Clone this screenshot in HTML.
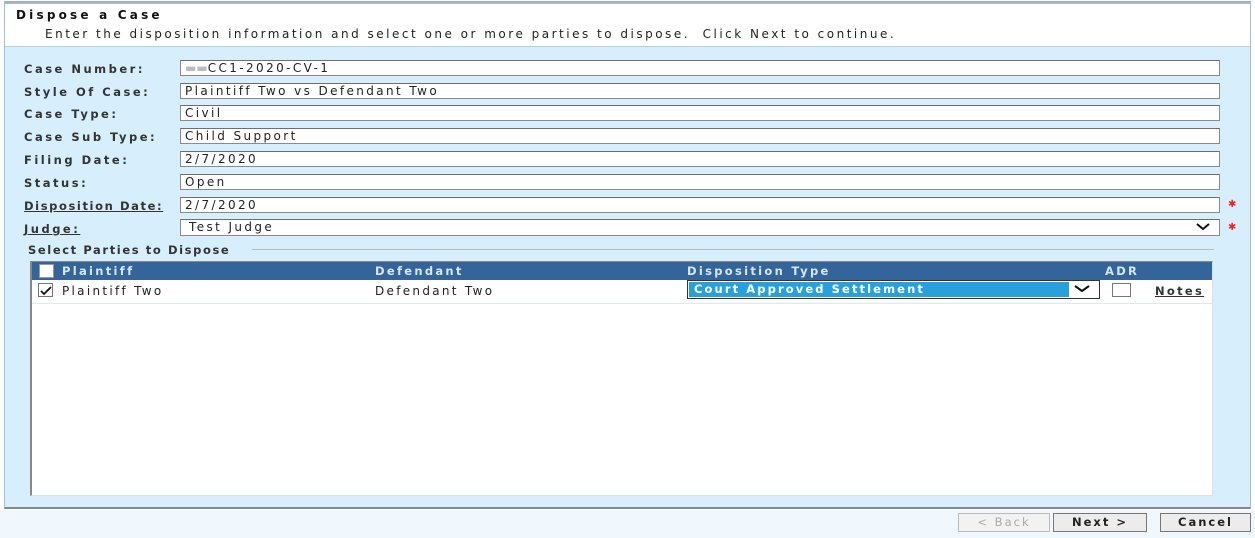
<!DOCTYPE html>
<html><head><meta charset="utf-8"><style>
*{margin:0;padding:0;box-sizing:border-box}
body{width:1255px;height:538px;background:#fff;position:relative;overflow:hidden;font-family:"DejaVu Sans","Liberation Sans",sans-serif;font-size:12px;letter-spacing:2.2px;color:#222}
.abs{position:absolute;white-space:nowrap}
.panel{left:4px;top:3px;width:1247px;height:506px;border:1px solid #a9bccb;border-bottom:2px solid #7f8a93;background:#d7effc}
.head{left:5px;top:4px;width:1245px;height:43px;background:#fff;border-bottom:1px solid #b9cfdd}
.lab{left:24px;font-weight:bold;color:#333;font-size:11.5px;letter-spacing:2.5px}
.inp{left:180px;width:1040px;height:16px;background:#fff;border:1px solid #8a8a8a;border-top-color:#6e6e6e;padding-left:4px;font-size:12px;line-height:14px;color:#222;letter-spacing:2.4px}
.u{text-decoration:underline}
.star{left:1228px;color:#e22;font-size:10px;letter-spacing:0}
.table{left:30px;top:261px;width:1183px;height:235px;background:#fff;border-left:2px solid #888;border-top:1px solid #888;border-bottom:1px solid #cfe3f0;border-right:1px solid #cfe3f0}
.th{left:32px;top:262px;width:1180px;height:18px;background:#33659a}
.hc{color:#d8e6f3;font-weight:bold;font-size:11.5px;top:264px;letter-spacing:2.3px}
.btn{top:513px;height:19px;border:1px solid #777;background:#ececec;text-align:center;font-weight:bold;font-size:11.5px;line-height:17px;letter-spacing:2px}
</style></head><body>
<div class="abs panel"></div>
<div class="abs head"></div>
<div class="abs" style="left:4px;top:1px;width:1247px;height:2px;background:#9fb4c4"></div>
<div class="abs" style="left:16px;top:8px;font-weight:bold;font-size:12px;letter-spacing:3.2px;color:#111">Dispose a Case</div>
<div class="abs" style="left:45px;top:27px;font-size:12px;letter-spacing:2.5px;color:#222">Enter the disposition information and select one or more parties to dispose.&nbsp; Click Next to continue.</div>

<div class="abs lab" style="top:62px">Case Number:</div>
<div class="abs inp" style="top:60px"><span style="color:#bbb;letter-spacing:0">▬▬</span>CC1-2020-CV-1</div>
<div class="abs lab" style="top:85px">Style Of Case:</div>
<div class="abs inp" style="top:83px">Plaintiff Two vs Defendant Two</div>
<div class="abs lab" style="top:107px">Case Type:</div>
<div class="abs inp" style="top:105px">Civil</div>
<div class="abs lab" style="top:130px">Case Sub Type:</div>
<div class="abs inp" style="top:128px">Child Support</div>
<div class="abs lab" style="top:153px">Filing Date:</div>
<div class="abs inp" style="top:151px">2/7/2020</div>
<div class="abs lab" style="top:176px">Status:</div>
<div class="abs inp" style="top:174px">Open</div>
<div class="abs lab u" style="top:199px;letter-spacing:1.6px">Disposition Date:</div>
<div class="abs inp" style="top:197px">2/7/2020</div>
<div class="abs star" style="top:199px">✱</div>
<div class="abs lab u" style="top:222px">Judge:</div>
<div class="abs inp" style="top:219px;height:17px;padding-left:8px">Test Judge</div>
<svg class="abs" style="left:1195px;top:222px" width="16" height="10"><path d="M2 2 L8 7 L14 2" stroke="#111" stroke-width="2" fill="none"/></svg>
<div class="abs star" style="top:222px">✱</div>

<div class="abs" style="left:28px;top:243px;font-weight:bold;font-size:11.5px;color:#333;letter-spacing:1.6px">Select Parties to Dispose</div>
<div class="abs" style="left:252px;top:249px;width:962px;height:1px;background:#b5bcc2"></div>

<div class="abs table"></div>
<div class="abs th"></div>
<div class="abs" style="left:39px;top:264px;width:15px;height:14px;background:#fff;border:1px solid #999"></div>
<div class="abs hc" style="left:62px">Plaintiff</div>
<div class="abs hc" style="left:375px">Defendant</div>
<div class="abs hc" style="left:687px">Disposition Type</div>
<div class="abs hc" style="left:1105px">ADR</div>

<div class="abs" style="left:38px;top:283px;width:15px;height:14px;background:#fff;border:1px solid #777"></div>
<svg class="abs" style="left:39px;top:284px" width="14" height="13"><path d="M2 7 L5 10 L12 3" stroke="#111" stroke-width="1.8" fill="none"/></svg>
<div class="abs" style="left:62px;top:284px;font-size:12px;color:#222;letter-spacing:2.3px">Plaintiff Two</div>
<div class="abs" style="left:375px;top:284px;font-size:12px;color:#222;letter-spacing:2.3px">Defendant Two</div>
<div class="abs" style="left:687px;top:280px;width:413px;height:19px;border:1px solid #333;background:#fff"></div>
<div class="abs" style="left:689px;top:282px;width:380px;height:15px;background:#27a0dc;color:#fff;font-weight:bold;font-size:11.5px;padding-left:5px;line-height:15px;letter-spacing:2.1px">Court Approved Settlement</div>
<svg class="abs" style="left:1073px;top:284px" width="18" height="10"><path d="M2 2 L9 7 L16 2" stroke="#111" stroke-width="2" fill="none"/></svg>
<div class="abs" style="left:1112px;top:283px;width:19px;height:14px;border:1px solid #777;background:#fff"></div>
<div class="abs u" style="left:1155px;top:284px;font-weight:bold;font-size:11.5px;color:#333;letter-spacing:2.3px">Notes</div>
<div class="abs" style="left:32px;top:303px;width:1180px;height:1px;background:#d7eaf6"></div>

<div class="abs" style="left:0;top:510px;width:1255px;height:28px;background:#f0f8fe"></div>
<div class="abs btn" style="left:958px;width:92px;color:#aaa;border-color:#bbb;background:#f2f2f2;font-weight:normal">&lt; Back</div>
<div class="abs btn" style="left:1053px;width:94px">Next &gt;</div>
<div class="abs btn" style="left:1160px;width:91px">Cancel</div>
</body></html>
